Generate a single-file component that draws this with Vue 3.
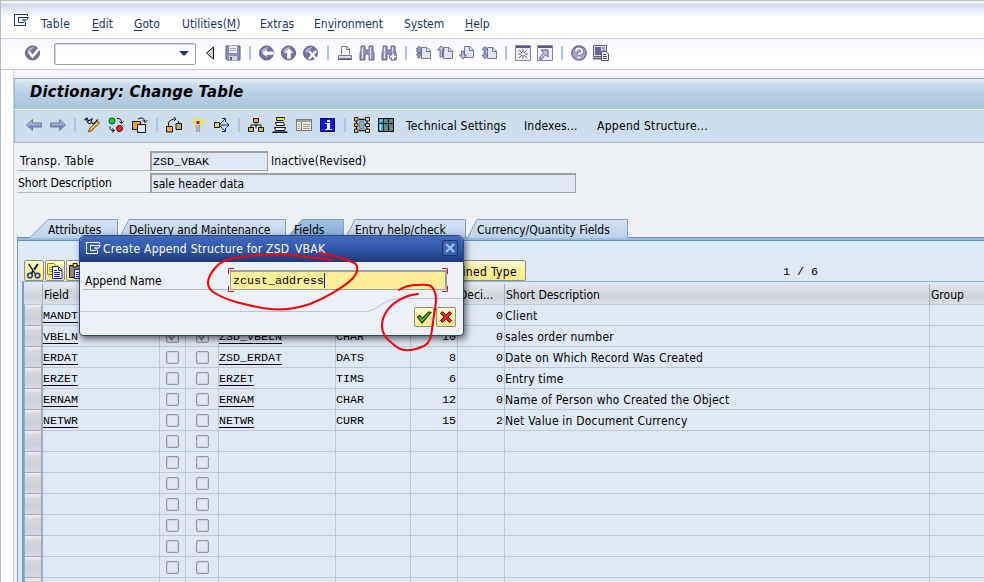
<script setup>
import { ref } from "vue";

const menus = [
    { html: "Table", w: 51 },
    { html: "<u>E</u>dit", w: 42 },
    { html: "<u>G</u>oto", w: 48 },
    { html: "Utilities(<u>M</u>)", w: 78 },
    { html: "Extr<u>a</u>s", w: 54 },
    { html: "En<u>v</u>ironment", w: 90 },
    { html: "S<u>y</u>stem", w: 61 },
    { html: "<u>H</u>elp", w: 40 },
];

const disc = '<circle cx="7.5" cy="8" r="7" fill="#74749e" stroke="#5f5f88"/><path d="M2 7Q4 2 10 2Q6 4 4 8Z" fill="#b9b9dc"/>';
const page = '<path d="M6.5 2.5H12L15.5 6V13.5H6.5Z" fill="#e3e3f6" stroke="#77779c"/><path d="M11.5 2.5V6.5H15" fill="none" stroke="#77779c"/>';
const binocular = '<path d="M2 1H6V5H10V1H14V6L15 8V15H10V9H6V15H1V8L2 6Z" fill="#8c8cb8" stroke="#66668f"/><path d="M3.5 2V14M11.5 2V14" stroke="#dcdcf5" stroke-width="1.4"/>';

const icons = {
    ok: disc + '<path d="M4 7L7.5 11.5L15 2.5" fill="none" stroke="#fff" stroke-width="2.6"/>',
    save: '<path d="M1 1H15V15H2L1 14Z" fill="#8e8eb9" stroke="#5c5c84"/><path d="M4 1H12V8H4Z" fill="#f0f0fb"/><path d="M5 3.5H11M5 5.5H11" stroke="#a9a9d0"/><path d="M4 11H12V15H4Z" fill="#d0d0e9"/><path d="M5 12H7V15H5Z" fill="#5c5c84"/>',
    back: disc + '<path d="M3 8L8 3.5V6.5H15V10H8V12.5Z" fill="#fff" stroke="#8888ad" stroke-width=".5"/>',
    exit: disc + '<path d="M8 3L12.5 8H10V14H6V8H3.5Z" fill="#fff" stroke="#8888ad" stroke-width=".5"/>',
    cancel: disc + '<path d="M6 6L13.500 14M13 6L6 14" stroke="#fff" stroke-width="2.4"/>',
    print: '<path d="M4.5 9.5V1.5H10L12.5 4V9.5" fill="#fafaff" stroke="#77779a"/><path d="M9.5 1.5V4.5H12" fill="none" stroke="#77779a"/><path d="M1.5 10.5H14.5V13.5H1.5Z" fill="#d9d9ef" stroke="#77779a"/><path d="M1 14.5H15" stroke="#50507a"/>',
    find: binocular,
    findNext: binocular + '<path d="M12 7.5V15.5M8 11.5H16" stroke="#77779c" stroke-width="4"/><path d="M12 8.5V14.5M9 11.5H15" stroke="#fff" stroke-width="2"/>',
    first: page + '<path d="M4 1L7 4H5V6H7L4 9L1 6H3V4H1ZM4 7L7 10H5V13H3V10H1Z" fill="#a5a5cd" stroke="#606086" stroke-width=".8"/>',
    prev: page + '<path d="M4 1L7.5 5H5.5V12H3V5H.5Z" fill="#bfbfe0" stroke="#606086" stroke-width=".9"/>',
    next: '<path d="M5.5 1.5H11L14.5 5V12.5H5.5Z" fill="#e3e3f6" stroke="#77779c"/><path d="M10.5 1.5V5.5H14" fill="none" stroke="#77779c"/><path d="M2.5 6H5V10H7.5L4 14L.5 10H2.5Z" fill="#bfbfe0" stroke="#606086" stroke-width=".9"/>',
    last: page + '<path d="M3 2H5V4H7L4 7L1 4H3ZM3 7H5V10H7L4 14L1 10H3Z" fill="#a5a5cd" stroke="#606086" stroke-width=".8"/>',
    session: '<path d="M.5 .5H15.5V15.5H.5Z" fill="#f0f0fb" stroke="#8585a8"/><path d="M1 1H15V3H1Z" fill="#5b5b88"/><path d="M8 4V8M8 10V14M3 9H6.5M9.5 9H13M4 5L7 8M9 10L12 13M12 5L9 8M7 10L4 13" stroke="#62628c"/>',
    shortcut: '<path d="M.5 .5H15.5V15.5H.5Z" fill="#f0f0fb" stroke="#8585a8"/><path d="M1 1H15V3H1Z" fill="#5b5b88"/><path d="M4 5H11V12L8.5 9.5L5 14H2L6.5 7.5Z" fill="#c4c4e2" stroke="#62628c"/>',
    help: '<circle cx="8" cy="8" r="7.2" fill="#a5a5cc" stroke="#66668c" stroke-width="1.3"/><path d="M5 6.5Q5 3.5 8 3.5T11 6.5Q11 8 8 9V10.5" fill="none" stroke="#6d6d95" stroke-width="3.4"/><path d="M5 6.5Q5 3.5 8 3.5T11 6.5Q11 8 8 9V10M8 11.5V13.5" fill="none" stroke="#fff" stroke-width="2"/>',
    layout: '<path d="M.5 .5H13.5V11.5H.5Z" fill="#ddddf0" stroke="#606086"/><path d="M2 2H8V10H2Z" fill="#66668f"/><path d="M9 2H12V10H9Z" fill="#a0a0c6"/><path d="M0 13.5H9" stroke="#606086" stroke-width="2"/><path d="M8.5 6.5H13L15.5 9V15.5H8.5Z" fill="#fff" stroke="#50506c"/><path d="M10 9.5H13M10 11.5H14M10 13.5H14" stroke="#50506c"/>',

    left: '<path d="M.5 8L6.5 2.5V6H15.5V10H6.5V13.5Z" fill="#a5b8cf" stroke="#6c7c8d"/><path d="M2 8.5H15V9.5H6V12Z" fill="#6575df"/>',
    right: '<path d="M15.5 8L9.5 2.5V6H.5V10H9.5V13.5Z" fill="#9ab3c8" stroke="#6c7c8d"/><path d="M14 8.5H1V9.5H10V12Z" fill="#6575df"/>',
    edit: '<path d="M.5 3L3 1L4.500 4L8 2L7 5L9.500 7L14 2.5" fill="none" stroke="#111" stroke-width="1.1"/><path d="M2 2L4 6L7 7" fill="none" stroke="#111"/><path d="M13.5 4L15.5 6L8 13.5L4.5 15L5.5 11.5Z" fill="#ffa63c" stroke="#5e3506" stroke-width=".8"/><path d="M13 6L7 12" stroke="#fff3b0"/>',
    toggle: '<circle cx="4" cy="4" r="3" fill="#16d92b" stroke="#064f0b"/><circle cx="11.5" cy="11.5" r="3" fill="#ed2022" stroke="#5c0708"/><path d="M9 1.5Q13.5 1 13.5 6M11.5 4.5L13.5 6.5L15.5 4.5M2 9.5Q1.5 14 6 13.5M4 11.5L6.5 13.5L4 15.5" fill="none" stroke="#111"/>',
    copyTo: '<path d="M.5 4.5H8.5V12.5H.5Z" fill="#ff9f18" stroke="#111"/><path d="M5.5 7.5H13.5V15.5H5.5Z" fill="#d9ebff" stroke="#111"/><path d="M6 2Q12 -1 13 5M10.5 3L13 5.5L15.5 3" fill="none" stroke="#111"/>',
    where: '<path d="M.5 9.5H6.5V15H.5Z" fill="#ffa92b" stroke="#111"/><path d="M10 6.5H15.5V12.5H10Z" fill="#b7b568" stroke="#111"/><path d="M2.5 9V6Q4 2 10 2M8 0L10 2L8 4M12.5 4V6" fill="none" stroke="#111"/>',
    wand: '<path d="M8 8V15" stroke="#666" stroke-width="3"/><path d="M8 8V15" stroke="#fff"/><path d="M8 0V3M2 5H6M10 5H15M3 1L6 4M13 1L10 4M4 10L6 8M12 10L10 8" stroke="#f4ea00" stroke-width="1.3"/><path d="M6.5 4H9.5V7H6.5Z" fill="#e30b16"/>',
    spread: '<path d="M.5 5.5H5.500V10.5H.5Z" fill="#e6dc43" stroke="#111"/><path d="M6 8H15M12.5 5.5L15 8L12.5 10.5M6 7L11 2M8 1.5H11.5V5M6 9L11 14M8 14.5H11.5V11" fill="none" stroke="#20209a"/>',
    tree: '<path d="M8 5V11M3 11V8H13V11" fill="none" stroke="#111"/><path d="M5.5 1.5H10.5V5.5H5.5Z" fill="#f6a426" stroke="#111"/><path d="M.5 10.5H5.5V14.5H.5ZM10.5 10.5H15.5V14.5H10.5Z" fill="#bcc06a" stroke="#111"/>',
    levels: '<path d="M4.5 .5H12.5L11.5 3.5H4.5ZM3.5 5.5H11.5L12.5 8.5H4.5ZM2.5 10.5H13.5L12.5 13.5H3.5ZM0 15.5H15.5" fill="#f8f9e9" stroke="#111"/><path d="M5 1H12V3H5Z" fill="#ffe62c"/><path d="M1 14H15V15H1Z" fill="#285aa0"/>',
    list: '<path d="M.5 2.5H15.5V13.5H.5Z" fill="#f1f1dc" stroke="#737977"/><path d="M1 3H15V5H1Z" fill="#9ba5a4"/><path d="M5.5 5V13" stroke="#737977"/><path d="M2 7.5H4M7 7.5H14M2 9.5H4M7 9.5H14M2 11.5H4M7 11.5H14" stroke="#999"/>',
    info: '<path d="M.5 1.5H14.5V14.5H.5Z" fill="#0818e6" stroke="#02034c"/><path d="M7 3H10V5H7ZM5 6H10V12H12V13H5V12H7V7H5Z" fill="#fff"/>',
    graph: '<path d="M2.500 2V14M13 2V14M5 2.500H11M5 8H13M5 13.500H11" stroke="#111" stroke-width="1.3"/><path d="M.5 .5H4V4H.5ZM.5 6.5H4V9.5H.5ZM.5 12H4V15.5H.5Z" fill="#f4b53f" stroke="#252525"/><path d="M11.5 .5H15.5V4H11.5ZM11.5 6.5H15.5V9.5H11.5ZM11.5 12H15.5V15.5H11.5Z" fill="#ddd396" stroke="#252525"/><path d="M5.5 4.5H10V11.5H5.5Z" fill="#8fa8ca" stroke="#6f87ab"/>',
    grid: '<path d="M.5 1.5H15.5V14.5H.5Z" fill="#67898e" stroke="#000"/><path d="M1 2H5V14H1Z" fill="#1eaeea"/><path d="M5.5 1V15M10.5 1V15M0 6.5H16" stroke="#000"/><path d="M2.5 3V4M2.5 7V13" stroke="#bdf4ff"/>',
    cut: '<path d="M3 1L10 11M12 1L5 11" stroke="#111" stroke-width="2"/><path d="M4 1L10 10" stroke="#f6f6c5"/><circle cx="4" cy="12.5" r="2.3" fill="none" stroke="#183f98" stroke-width="1.6"/><circle cx="11.5" cy="12.5" r="2.3" fill="none" stroke="#183f98" stroke-width="1.6"/>',
    copy: '<path d="M.5 .5H7L9.5 3V11.5H.5Z" fill="#fff56f" stroke="#87822c"/><path d="M2 4.5H8M2 6.5H8M2 8.5H8" stroke="#a29d40"/><path d="M5.5 3.5H11.5L15 7V15.5H5.5Z" fill="#fff" stroke="#1620b4"/><path d="M11.5 4V7.5H15M7 9.5H13M7 11.5H13M7 13.5H13M7 7.5H10" fill="none" stroke="#1620b4"/>',
    paste: '<path d="M1.5 2.5H13V14.5H1.5Z" fill="#8b8b70" stroke="#111"/><path d="M5 .5H9V4H5Z" fill="#ffe32b" stroke="#111"/><path d="M6.5 6.5H15V15.5H6.5Z" fill="#fff" stroke="#1620b4"/><path d="M8 9.5H14M8 11.5H14M8 13.5H14" stroke="#1620b4"/>',
    check: '<path d="M1.5 8L4 6.5L6 9.5L13 3L15 3.500L6 14Z" fill="#46ae1d" stroke="#17450b" stroke-width="1.2"/><path d="M3.5 8L6 11.5L13 4.500" fill="none" stroke="#7bcb3b"/>',
    cross: '<path d="M2.500 4.5L4.5 2.500L8 6L11.5 2.500L13.500 4.5L10 8L13.500 11.5L11.5 13.500L8 10L4.5 13.500L2.500 11.5L6 8Z" fill="#ed2119" stroke="#5e0d07"/>',
    door: '<path d="M13.5 3V1.500H.5V12.500H11.500V9" fill="none" stroke="currentColor"/><path d="M4.500 4.500H14.500L12.500 7H9M4.500 4V9.500H9.500L11.500 7M8 7H10" fill="none" stroke="currentColor"/>',
};

const standardBar = [
    ["back", "exit", "cancel"],
    ["print", "find", "findNext"],
    ["first", "prev", "next", "last"],
    ["session", "shortcut"],
    ["help", "layout"],
];

const applicationBar = [
    ["left", "right"],
    ["edit", "toggle", "copyTo"],
    ["where", "wand", "spread"],
    ["tree", "levels", "list", "info"],
    ["graph", "grid"],
];

const tabs = [
    { label: "Attributes", w: 90, slope: 19, pad: 19 },
    { label: "Delivery and Maintenance", w: 168, slope: 10, pad: 10 },
    { label: "Fields", w: 58, slope: 15, pad: 7, active: true },
    { label: "Entry help/check", w: 122, slope: 10, pad: 10 },
    { label: "Currency/Quantity Fields", w: 162, slope: 10, pad: 10 },
];

const fields = [
    { name: "MANDT", key: true, element: "MANDT", type: "CLNT", length: 3, dec: 0, text: "Client" },
    { name: "VBELN", key: true, element: "ZSD_VBELN", type: "CHAR", length: 10, dec: 0, text: "sales order number" },
    { name: "ERDAT", element: "ZSD_ERDAT", type: "DATS", length: 8, dec: 0, text: "Date on Which Record Was Created" },
    { name: "ERZET", element: "ERZET", type: "TIMS", length: 6, dec: 0, text: "Entry time" },
    { name: "ERNAM", element: "ERNAM", type: "CHAR", length: 12, dec: 0, text: "Name of Person who Created the Object" },
    { name: "NETWR", element: "NETWR", type: "CURR", length: 15, dec: 2, text: "Net Value in Document Currency" },
];
const rows = [...fields, ...Array.from({ length: 8 }, () => ({}))];

const appendName = ref("zcust_address");
</script>

<template>
    <div class="window">
        <nav class="menubar">
            <svg class="icon door" viewBox="0 0 16 16" v-html="icons.door"></svg>
            <span v-for="menu in menus" :key="menu.html" class="menu" :style="{ width: menu.w + 'px' }" v-html="menu.html"></span>
        </nav>

        <div class="standard">
            <svg class="icon ok" viewBox="0 0 16 16" v-html="icons.ok"></svg>
            <div class="command"><i></i></div>
            <svg class="collapse" viewBox="0 0 9 14"><path d="M8 1V13L1 7Z" fill="#d4d4d4" stroke="#111" /></svg>
            <span class="cell"><svg class="icon" viewBox="0 0 16 16" v-html="icons.save"></svg></span>
            <template v-for="(group, g) in standardBar" :key="g">
                <span class="sep"></span>
                <span v-for="name in group" :key="name" class="cell">
                    <svg class="icon" viewBox="0 0 16 16" v-html="icons[name]"></svg>
                </span>
            </template>
        </div>

        <main class="screen">
            <h1>Dictionary: Change Table</h1>
            <div class="application">
                <template v-for="(group, g) in applicationBar" :key="g">
                    <span v-if="g" class="sep"></span>
                    <span v-for="name in group" :key="name" class="cell">
                        <svg class="icon" viewBox="0 0 16 16" v-html="icons[name]"></svg>
                    </span>
                </template>
                <span class="action technical">Technical Settings</span>
                <span class="action indexes">Indexes...</span>
                <span class="action append">Append Structure...</span>
            </div>

            <div class="head">
                <div class="line">
                    <label class="shifted">Transp. Table</label>
                    <div class="field mono short">ZSD_VBAK</div>
                    <span class="status">Inactive(Revised)</span>
                </div>
                <div class="line">
                    <label>Short Description</label>
                    <div class="field long">sale header data</div>
                </div>
            </div>

            <div class="tabs">
                <div v-for="tab in tabs" :key="tab.label" class="tab" :style="{ width: tab.w + 'px', paddingLeft: tab.pad + 'px' }">
                    <svg class="shape" :viewBox="`0 0 ${tab.w} 19`" :width="tab.w" height="19">
                        <defs>
                            <linearGradient id="tab-on" x2="0" y2="1"><stop stop-color="#a2c1e0" /><stop offset="1" stop-color="#83add8" /></linearGradient>
                            <linearGradient id="tab-off" x2="0" y2="1"><stop stop-color="#d5e3f3" /><stop offset="1" stop-color="#bad2ea" /></linearGradient>
                        </defs>
                        <path :d="`M.5 19L${tab.slope} .5H${tab.w - 1.5}V19`" :fill="tab.active ? 'url(#tab-on)' : 'url(#tab-off)'" stroke="#7f9fbe" />
                    </svg>
                    <span>{{ tab.label }}</span>
                </div>
            </div>

            <section class="panel">
                <div class="tools">
                    <span class="btn"><svg class="icon" viewBox="0 0 16 16" v-html="icons.cut"></svg></span>
                    <span class="btn"><svg class="icon" viewBox="0 0 16 16" v-html="icons.copy"></svg></span>
                    <span class="btn"><svg class="icon" viewBox="0 0 16 16" v-html="icons.paste"></svg></span>
                    <span class="btn wide">Predefined Type</span>
                    <span class="mono counter">1 / 6</span>
                </div>
                <div class="table">
                    <div class="row header">
                        <div></div>
                        <div class="pad">Field</div>
                        <div>Key</div>
                        <div>Initi...</div>
                        <div>Data element</div>
                        <div>Data Type</div>
                        <div>Length</div>
                        <div class="pad">Deci...</div>
                        <div class="pad">Short Description</div>
                        <div class="pad">Group</div>
                    </div>
                    <div v-for="(row, i) in rows" :key="i" class="row">
                        <div class="handle"></div>
                        <div class="mono"><span v-if="row.name" class="link">{{ row.name }}</span></div>
                        <div class="center"><span class="box"><svg v-if="row.key" viewBox="0 0 11 11"><path d="M2 5L4.5 8.5L9 2" /></svg></span></div>
                        <div class="center"><span class="box"><svg v-if="row.key" viewBox="0 0 11 11"><path d="M2 5L4.5 8.5L9 2" /></svg></span></div>
                        <div class="mono"><span v-if="row.name" class="link">{{ row.element }}</span></div>
                        <div class="mono">{{ row.type }}</div>
                        <div class="mono number">{{ row.length }}</div>
                        <div class="mono number">{{ row.dec }}</div>
                        <div class="text">{{ row.text }}</div>
                        <div></div>
                    </div>
                </div>
            </section>
        </main>

        <div class="dialog">
            <div class="caption">
                <svg class="icon" viewBox="0 0 16 16" v-html="icons.door"></svg>
                <span>Create Append Structure for ZSD_VBAK</span>
                <i class="close"><svg viewBox="0 0 10 10"><path d="M1 1L9 9M9 1L1 9" stroke="#9dbdf8" stroke-width="2.4" /></svg></i>
            </div>
            <div class="entry">
                <label>Append Name</label>
                <div class="focus">
                    <div class="input mono">{{ appendName }}<i class="caret"></i></div>
                    <svg class="corners" viewBox="0 0 220 24"><path d="M.5 6V.5H6M214 .5H219.5V6M.5 18V23.5H6M214 23.5H219.5V18" fill="none" stroke="#d31a20" /></svg>
                </div>
            </div>
            <svg class="divider" viewBox="0 0 383 16"><path d="M0 14.5H285C298 14.5 302 1.500 321 1.500H383" fill="none" stroke="#b7c4d6" /></svg>
            <div class="buttons">
                <span class="btn"><svg class="icon" viewBox="0 0 16 16" v-html="icons.check"></svg></span>
                <span class="btn"><svg class="icon" viewBox="0 0 16 16" v-html="icons.cross"></svg></span>
            </div>
        </div>

        <!-- freehand marks around the name and the confirm button -->
        <svg class="marks" viewBox="0 0 984 582">
            <path d="M332 260C310 257 278 252 250 256C235 258 224 258 216 267C207 277 205 286 213 292C225 300 242 304 262 308C280 311 296 309 310 304C325 298 343 288 352 279C359 272 359 264 352 262C343 258 331 255 319 253" />
            <path d="M418 294C404 295 390 304 385 314C379 326 382 336 393 344C401 352 410 352 424 346C432 341 431 335 433 322C435 308 438 298 434 290C431 283 425 285 417 285C410 285 405 286 399 290" />
        </svg>
    </div>
</template>

<style>
body {
  margin: 0;
  overflow: hidden;
}
</style>

<style scoped>
* {
  box-sizing: border-box;
}

.window {
  position: relative;
  width: 984px;
  height: 582px;
  overflow: hidden;
  border-left: 1px solid #aebccb;
  background: #fff;
  color: #000;
  font: 12px/16px "DejaVu Sans Condensed", "DejaVu Sans", sans-serif;
  font-stretch: condensed;
  white-space: pre;
}

.icon {
  width: 16px;
  height: 16px;
  flex: none;
}

.mono {
  font-family: "Liberation Mono", monospace;
  font-size: 11.67px;
}

.menubar {
  display: flex;
  align-items: center;
  height: 39px;
  padding: 8px 0 0 13px;
  border-top: 1px solid #b4c1d0;
  border-bottom: 1px solid #cbd3df;
  background: linear-gradient(#f5f8fd 2px, #cedaee 3px, #e5ecf7 9px, #fff 17px);
  color: #1c3564;
}

.door {
  margin: -6px 11px 0 0;
}

.menu {
  flex: none;
}

.menu:nth-of-type(1) {
  letter-spacing: 0.3px;
}

.menu :deep(u) {
  text-underline-offset: 2px;
}

.standard {
  display: flex;
  align-items: center;
  height: 31px;
  padding: 0 0 2px 24px;
  border-bottom: 1px solid #c9cbd3;
  background: linear-gradient(#faf7fe, #fff 16px);
}

.ok {
  margin-right: 13px;
}

.command {
  display: flex;
  align-items: center;
  justify-content: flex-end;
  width: 142px;
  height: 22px;
  margin: 1px 9px 0 0;
  padding-right: 6px;
  border: 1px solid #a4a4a4;
  border-radius: 2px;
  box-shadow: inset 1px 1px #d5d5d5;
}

.command i {
  border: 5px solid transparent;
  border-top: 5px solid #203963;
  border-bottom: 0;
}

.collapse {
  width: 10px;
  height: 14px;
  margin-right: 7px;
}

.cell {
  display: flex;
  justify-content: center;
  width: 22px;
  flex: none;
}

.sep {
  width: 2px;
  height: 14px;
  margin: 0 5px;
  background: #a9c4e4;
  flex: none;
}

.screen {
  height: 513px;
  margin-left: 12px;
  padding-top: 8px;
  border-left: 1px solid #ccd1dc;
  background: linear-gradient(#f8f8ff, #edf0fb 8px, #eef1f6 8px);
}

h1 {
  height: 31px;
  margin: 0;
  padding-left: 15px;
  border-top: 1px solid #93a6c2;
  border-left: 1px solid #9eb3cc;
  background: linear-gradient(#e4edf6 1px, #cbdeed 5px, #c5d8e7 9px, #b9d1e7 14px, #b3cbdb 22px, #aac4e2 29px);
  font-size: 16.5px;
  line-height: 26px;
  font-style: italic;
  letter-spacing: 0.18px;
}

.application {
  display: flex;
  align-items: center;
  height: 34px;
  padding: 0 0 2px 7px;
  border-top: 1px solid #eef5fb;
  border-left: 1px solid #a9bdd0;
  border-bottom: 1px solid #a7b5c4;
  background: #cddfee;
}

.application .cell {
  width: 24px;
}

.application .sep {
  margin: 0 4px;
}

.action {
  padding-top: 1px;
  letter-spacing: 0.18px;
}

.technical {
  width: 118px;
  margin-left: 8px;
}

.indexes {
  width: 73px;
}

.append {
  letter-spacing: 0.3px;
}

.head {
  display: flex;
  flex-direction: column;
  gap: 2px;
  padding: 8px 0 0 3px;
}

.line {
  display: flex;
  height: 20px;
  line-height: 21px;
}

.line label {
  width: 133px;
  padding-left: 1px;
  border-bottom: 1px solid #b4b8bf;
}

.line .shifted {
  padding-left: 3px;
  letter-spacing: 0.35px;
}

.field {
  padding-left: 1px;
  border: 1px solid #a0a0a0;
  border-width: 2px 1px 1px 2px;
  background: #dde9f5;
  line-height: 18px;
}

.short {
  width: 118px;
}

.long {
  width: 426px;
}

.status {
  padding-left: 3px;
  letter-spacing: 0.12px;
}

.tabs {
  display: flex;
  height: 44px;
  padding: 26px 0 0 15px;
}

.tab {
  position: relative;
  height: 19px;
  flex: none;
  line-height: 22px;
}

.tab span {
  position: relative;
}

.shape {
  position: absolute;
  left: 0;
  top: 0;
}

.panel {
  height: 350px;
  margin-left: 3px;
  padding: 3px 0 0 4px;
  border-top: 1px solid #6591c0;
  border-left: 1px solid #7c9dc3;
  background: linear-gradient(#9dbbdc 2px, #6591c0 2px, #6591c0 3px, #ddeaf6 3px);
}

.tools {
  display: flex;
  height: 40px;
  padding: 19px 0 0 2px;
  gap: 1px;
}

.btn {
  display: flex;
  align-items: center;
  justify-content: center;
  width: 20px;
  height: 21px;
  border: 1px solid #8c8d84;
  border-radius: 2px;
  background: linear-gradient(#fffbd1, #fff09f 45%, #ffe98a);
  flex: none;
}

.wide {
  justify-content: flex-end;
  width: 120px;
  margin-left: 319px;
  padding: 2px 8px 0 0;
  letter-spacing: 0.35px;
}

.counter {
  margin-left: 256px;
  line-height: 24px;
}

.table {
  padding-top: 2px;
  border-top: 1px solid #8fb0d5;
  border-left: 2px solid #7a9fca;
}

.row {
  display: grid;
  grid-template-columns: 19px 117px 26px 33px 117px 75px 47px 47px 425px 55px;
  height: 21px;
  line-height: 22px;
}

.row > div {
  overflow: hidden;
  border-right: 1px solid #bac8d7;
  border-bottom: 1px solid #bac8d7;
}

.header > div {
  border-right-color: #a5afb8;
  background: linear-gradient(#e6e6ee, #d9dae1 7px, #cdd5dc 13px, #dddfe7);
  line-height: 23px;
}

.header .pad {
  padding-left: 1px;
}

.row .handle {
  border: 1px solid #a4a9bd;
  border-width: 0 2px 1px 1px;
  background: linear-gradient(#f0f1f4, #d5d8de 4px, #ccd2da 13px, #d8d9e2);
}

.row .center {
  display: flex;
  align-items: center;
  justify-content: center;
}

.row .text {
  letter-spacing: 0.2px;
}

.box {
  width: 13px;
  height: 13px;
  border: 1px solid #969696;
  border-radius: 2px;
  background: #dfe8f8;
  box-shadow: inset 0 0 0 1px #ccd6e1;
}

.box svg {
  display: block;
}

.box path {
  fill: none;
  stroke: #888;
  stroke-width: 2;
}

.link {
  display: inline-block;
  height: 17px;
  border-bottom: 1px solid #000;
  line-height: 20px;
  vertical-align: top;
  margin-top: 1px;
}

.row .number {
  padding-right: 1px;
  text-align: right;
}

.dialog {
  position: absolute;
  left: 78px;
  top: 235px;
  width: 385px;
  height: 101px;
  border: 1px solid #294881;
  border-radius: 6px 6px 4px 4px;
  background: #eef1f7;
  box-shadow: 2px 3px 7px #0009;
}

.caption {
  display: flex;
  align-items: center;
  height: 26px;
  padding: 0 5px 0 6px;
  border-radius: 5px 5px 0 0;
  background: linear-gradient(#4169bd, #3157a7 50%, #1d3b7b);
  color: #fff;
}

.caption span {
  margin-left: 1px;
  letter-spacing: 0.25px;
}

.close {
  display: flex;
  align-items: center;
  justify-content: center;
  width: 16px;
  height: 16px;
  margin: -2px 0 0 auto;
  border: 1px solid #15346f;
  border-radius: 2px;
  background: #3d61ae;
}

.close svg {
  width: 10px;
}

.entry {
  display: flex;
  height: 36px;
  padding: 8px 0 0 3px;
}

.entry label {
  width: 146px;
  height: 20px;
  padding-left: 2px;
  border-bottom: 1px solid #b4b8bf;
  line-height: 23px;
}

.focus {
  position: relative;
}

.input {
  display: flex;
  align-items: center;
  width: 217px;
  height: 20px;
  margin-left: 1px;
  padding-left: 2px;
  border: 1px solid #a0a09a;
  border-width: 2px 2px 1px 1px;
  background: #ffef9b;
}

.caret {
  width: 1px;
  height: 15px;
  background: #10225e;
}

.corners {
  position: absolute;
  left: -1px;
  top: -2px;
  width: 220px;
  height: 24px;
}

.divider {
  display: block;
  width: 383px;
  height: 16px;
  margin-top: -1px;
}

.buttons {
  display: flex;
  justify-content: flex-end;
  gap: 2px;
  margin-top: -6px;
  padding-right: 7px;
}

.buttons .btn {
  height: 20px;
}

.marks {
  position: absolute;
  left: -1px;
  top: 0;
  width: 984px;
  height: 582px;
  fill: none;
  stroke: #fb0009;
  stroke-width: 2;
  stroke-linecap: round;
  pointer-events: none;
}
</style>
